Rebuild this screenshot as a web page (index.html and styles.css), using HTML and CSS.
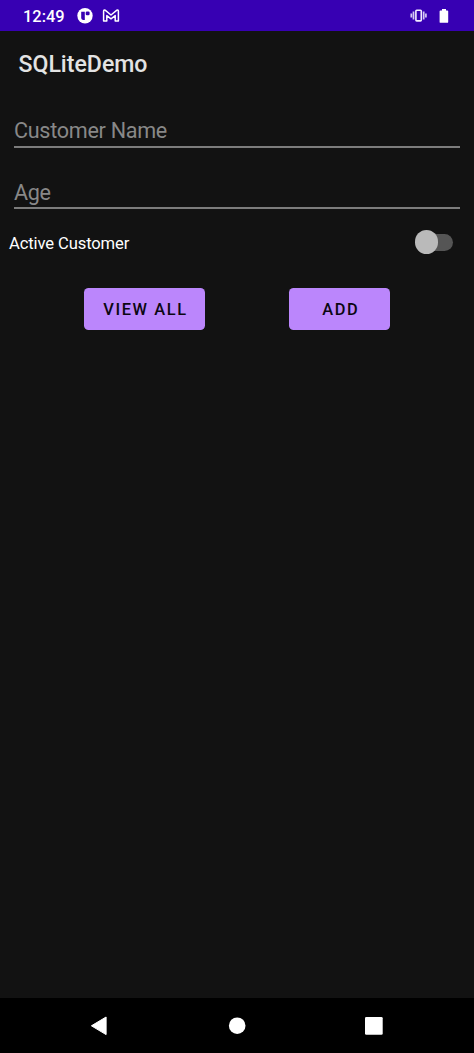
FILE: index.html
```html
<!DOCTYPE html>
<html lang="en">
<head>
<meta charset="utf-8">
<title>SQLiteDemo</title>
<link rel="stylesheet" href="styles.css">
</head>
<body>
<div class="screen">
  <div class="status">
    <span class="clock">12:49</span>
    <svg class="app-icon" width="16" height="16" viewBox="0 0 16 16"><circle cx="8" cy="7.7" r="7.7" fill="#fff"/><path d="M4.2 3.7h3.6v8.2H6Q4.2 11.9 4.2 10.1z" fill="#3700b3"/><rect x="8.7" y="3.5" width="3.9" height="3.8" rx="1.3" fill="#3700b3"/></svg>
    <svg class="mail-icon" width="18" height="14" viewBox="0 0 18 14"><path d="M1.6 2.2Q1.6.7 3.1 1.2L9 6l5.9-4.8Q16.4.7 16.4 2.2v9.7h-3.2V6.6L9 9.8 4.8 6.6v5.3H1.6z" fill="none" stroke="#fff" stroke-width="1.5" stroke-linejoin="round"/></svg>
    <svg class="vibrate" width="18" height="14" viewBox="0 0 18 14"><rect x="5.9" y="1.3" width="5.4" height="10.6" rx=".8" fill="none" stroke="#f2ecff" stroke-width="1.6"/><path d="M3.5 2.6v8M13.7 2.6v8M1.3 4.6v4M15.9 4.6v4" stroke="#d5c7f4" stroke-width="1.7"/></svg>
    <svg class="battery" width="10" height="14" viewBox="0 0 10 14"><path d="M3 0h4v1.4h1.3q.9 0 .9.9v10.6q0 .9-.9.9H1.5q-.9 0-.9-.9V2.3q0-.9.9-.9H3z" fill="#fff"/></svg>
  </div>
  <header class="title">SQLiteDemo</header>
  <main class="form">
    <div class="field">Customer Name</div>
    <div class="field age">Age</div>
    <div class="switch-row"><span class="label">Active Customer</span><span class="switch"><span class="thumb"></span></span></div>
    <div class="actions"><button class="btn view">VIEW ALL</button><button class="btn add">ADD</button></div>
  </main>
  <nav class="nav">
    <svg width="20" height="20" viewBox="0 0 20 20"><path d="M2.4 9.8 17.1 1v17.6z" fill="#fff" stroke="#fff" stroke-width="1" stroke-linejoin="round"/></svg>
    <svg width="20" height="20" viewBox="0 0 20 20"><circle cx="10.2" cy="9.7" r="8.3" fill="#fff"/></svg>
    <svg width="20" height="20" viewBox="0 0 20 20"><rect x="1" y="1" width="17.7" height="17.7" rx="1.3" fill="#fff"/></svg>
  </nav>
</div>
</body>
</html>
```

FILE: styles.css
```css
body { margin: 0; background: #121212; font-family: Roboto, sans-serif; }
.screen { width: 474px; height: 1053px; display: flex; flex-direction: column; background: #121212; overflow: hidden; }
.status { height: 31px; box-sizing: border-box; background: #3700b3; display: flex; align-items: center; padding: 0 25px 0 23px; }
.clock { width: 54px; color: #fff; font-size: 16.4px; font-weight: 500; line-height: 31px; padding-top: 1px; }
.mail-icon { margin-left: 9px; }
.vibrate { margin-left: auto; }
.battery { margin-left: 11px; }
.title { height: 65px; line-height: 67px; padding-left: 18.5px; color: #e3e3e3; font-size: 23.1px; font-weight: 500; }
.form { flex: 1; padding: 20px 14px 0; }
.field { box-sizing: border-box; height: 32px; line-height: 30px; border-bottom: 2px solid #7c7c7c; color: #888; font-size: 21.6px; letter-spacing: -.3px; }
.age { margin-top: 30px; height: 31px; line-height: 29px; }
.switch-row { display: flex; align-items: center; justify-content: space-between; height: 30px; margin: 18px 7.5px 0 -5px; color: #fff; font-size: 16.6px; letter-spacing: -.12px; }
.label { padding-top: 2px; }
.switch { display: flex; align-items: center; width: 33px; height: 17px; border-radius: 9px; background: #555; }
.thumb { width: 23.4px; height: 23.4px; flex: none; margin-left: -4.8px; border-radius: 50%; background: #bababa; }
.actions { display: flex; gap: 84px; padding: 30.6px 0 0 69.5px; }
.btn { height: 42px; padding: 1px 0 0; border: 0; border-radius: 4.6px; background: #bb86fc; color: #0b0711; font: 500 16.4px Roboto, sans-serif; letter-spacing: 1.6px; text-indent: 2.4px; }
.view { width: 121.5px; }
.add { width: 101.3px; }
.nav { height: 55px; background: #000; display: flex; align-items: center; justify-content: space-between; padding: 1px 90px 0 89px; box-sizing: border-box; }
```
